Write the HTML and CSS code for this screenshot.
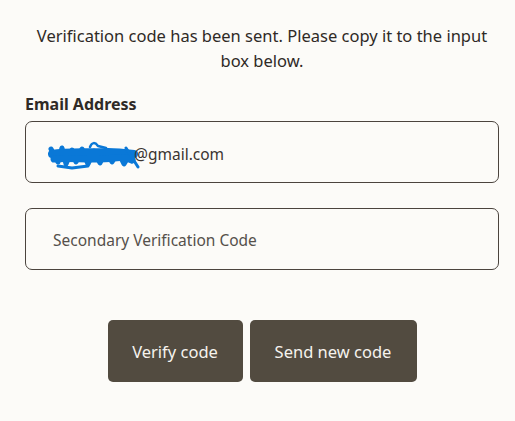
FILE: index.html
```html
<!DOCTYPE html>
<html lang="en">
<head>
<meta charset="utf-8">
<link rel="stylesheet" href="styles.css">
</head>
<body>
<main class="page">
  <p class="intro">Verification code has been sent. Please copy it to the input box below.</p>
  <label class="label">Email Address</label>
  <div class="field field-email">
    <svg class="scribble" width="92" height="32" viewBox="0 0 92 32" aria-hidden="true">
      <g fill="none" stroke="#0a78d7" stroke-linecap="round" stroke-linejoin="round">
        <path d="M3 10 L10 23 L14 9 L18 25 L24 11 L28 23 L34 10 L40 25 L46 12 L52 24 L58 11 L64 23 L70 13 L76 25 L82 15" stroke-width="5"/>
        <path d="M4 15 C20 12 40 14 60 13 C70 13 78 14 86 15" stroke-width="8"/>
        <path d="M6 20 C22 18 44 22 66 19 C74 18 80 19 84 21" stroke-width="7"/>
        <path d="M42 8 C44 3 47 3 50 7 L58 9" stroke-width="2.5"/>
        <path d="M78 9 L90 28" stroke-width="3"/>
        <path d="M10 27 L24 29 L40 27" stroke-width="3"/>
      </g>
    </svg><span class="email-text">@gmail.com</span>
  </div>
  <div class="field field-code">
    <span class="placeholder">Secondary Verification Code</span>
  </div>
  <div class="actions">
    <button class="btn btn-verify">Verify code</button>
    <button class="btn btn-send">Send new code</button>
  </div>
</main>
</body>
</html>
```
FILE: styles.css
```css
html, body {
  margin: 0;
  padding: 0;
  background: #fcfbf8;
}
body {
  font-family: "Noto Sans", "Open Sans", sans-serif;
  color: #2f2a26;
}
.page {
  width: 474px;
  margin-left: 25px;
  padding-top: 23px;
  display: flex;
  flex-direction: column;
}
.intro {
  margin: 0;
  text-align: center;
  font-size: 16.5px;
  line-height: 25px;
  padding: 0 4px;
}
.label {
  margin-top: 20px;
  font-size: 16px;
  font-weight: 700;
  line-height: 22px;
}
.field {
  box-sizing: border-box;
  height: 62px;
  border: 1px solid #4b443e;
  border-radius: 7px;
  display: flex;
  align-items: center;
}
.field-email {
  margin-top: 6px;
  padding-left: 22px;
  padding-top: 3px;
}
.scribble {
  display: block;
  margin-right: -6px;
  margin-top: 2px;
}
.email-text {
  color: #3a3430;
  font-size: 15.5px;
}
.field-code {
  margin-top: 25px;
  padding-left: 27px;
  padding-top: 2px;
}
.placeholder {
  color: #55504b;
  font-size: 15.5px;
}
.actions {
  margin-top: 50px;
  display: flex;
  justify-content: center;
  gap: 7px;
}
.btn {
  height: 62px;
  border: none;
  border-radius: 5px;
  background: #524b40;
  color: #f6f3ee;
  font-family: "Noto Sans", "Open Sans", sans-serif;
  font-size: 16.5px;
  padding: 0;
}
.btn-verify {
  width: 135px;
}
.btn-send {
  width: 167px;
}
```
